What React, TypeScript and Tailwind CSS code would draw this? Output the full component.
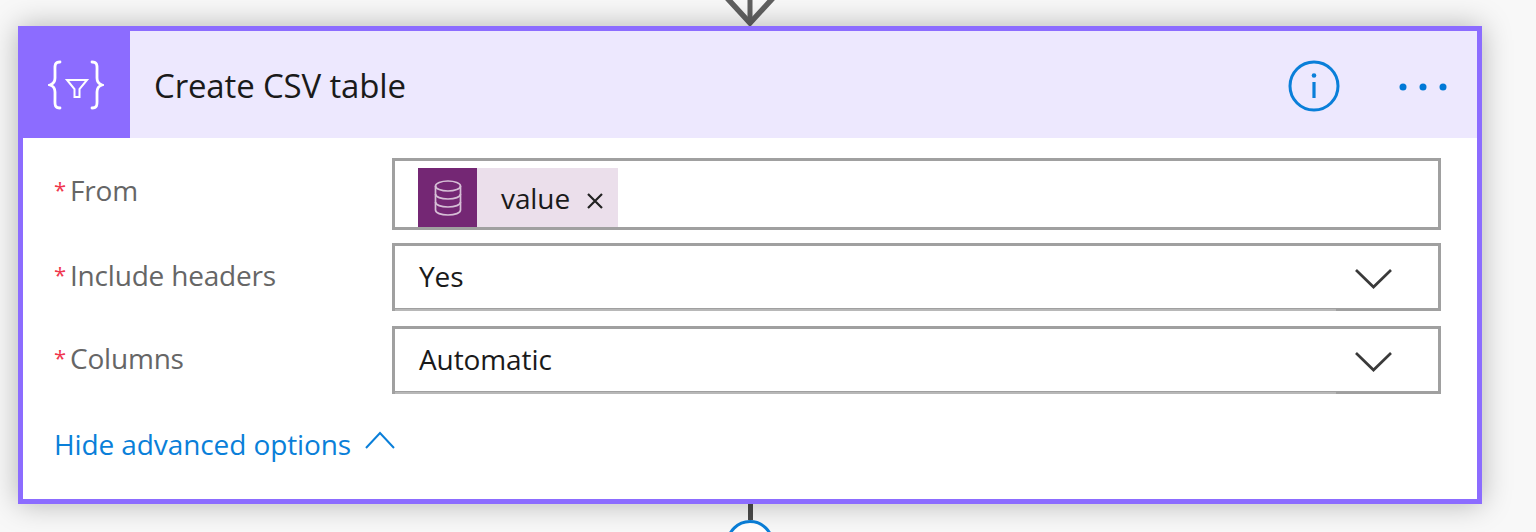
const font = { fontFamily: '"Open Sans", "Noto Sans", sans-serif' };

function Chevron() {
  return (
    <svg width="40" height="24" viewBox="0 0 40 24" fill="none" className="block mt-[3px] ml-[4px]">
      <path d="M2 3 L19.5 20 L37 3" stroke="#3a3a3a" strokeWidth="2.7" />
    </svg>
  );
}

function Label({ text }: { text: string }) {
  return (
    <div className="flex items-center text-[28px] leading-[34px] text-[#666666] tracking-[-0.2px]">
      <span className="w-[16px] text-[22px] text-[#f0364e] mt-[-3px]">*</span>
      <span>{text}</span>
    </div>
  );
}

function SelectRow({ label, value }: { label: string; value: string }) {
  return (
    <div className="grid grid-cols-[338px_1fr] h-[68px]">
      <div className="pt-[15px]">
        <Label text={label} />
      </div>
      <div className="relative flex items-center justify-between border-[3px] border-[#a0a0a0] pl-[24px] pr-[44px]">
        <span className="text-[28px] leading-[34px] text-[#1a1a1a] tracking-[-0.1px] mt-[-2px]">{value}</span>
        <Chevron />
        <div className="absolute left-0 right-[102px] bottom-[-3px] h-[2px] bg-[#b8b8b8]" />
      </div>
    </div>
  );
}

export default function App() {
  return (
    <div style={font} className="w-[1536px] h-[532px] overflow-hidden bg-[#f8f8f8]">
      <div className="w-[1464px] ml-[18px]">
        <div className="flex justify-center h-[26px]">
          <svg width="60" height="26" viewBox="0 0 60 26" fill="none">
            <path d="M30 -4 V24" stroke="#606060" strokeWidth="5" />
            <path d="M7 -2 L30 23 L53 -2" stroke="#606060" strokeWidth="5.5" />
          </svg>
        </div>

        <div className="h-[478px] border-[5px] border-[#8c6cff] bg-white shadow-[0_0_28px_rgba(0,0,0,0.28)] flex flex-col relative">
          <div className="h-[107px] flex bg-[#ede8fe] shrink-0">
            <div className="w-[107px] bg-[#8c6cff] flex items-center justify-center">
              <svg width="56" height="50" viewBox="0 0 56 50" fill="none" stroke="white" strokeWidth="2.8" strokeLinecap="round" className="mt-[1px] ml-[-1px]">
                <path d="M12 2 C6 2 7 6 7 12 V18 C7 22 5 24 2 25 C5 26 7 28 7 32 V38 C7 44 6 48 12 48" />
                <path d="M44 2 C50 2 49 6 49 12 V18 C49 22 51 24 54 25 C51 26 49 28 49 32 V38 C49 44 50 48 44 48" />
                <path d="M19 20 H39 L31.5 29 V37 H26.5 V29 Z" strokeWidth="2" strokeLinejoin="miter" />
              </svg>
            </div>
            <div className="flex-1 flex items-center justify-between pl-[24px] pr-[29px]">
              <span className="text-[33px] leading-[40px] text-[#1a1a1a] tracking-[-0.15px] mt-[2px]">Create CSV table</span>
              <div className="flex items-center gap-[58px] mt-[3px]">
                <svg width="52" height="52" viewBox="0 0 52 52" fill="none">
                  <circle cx="26" cy="26" r="24" stroke="#0a7fd9" strokeWidth="3" />
                  <circle cx="26" cy="15.5" r="2.3" fill="#0a7fd9" />
                  <path d="M26 22 V38" stroke="#0a7fd9" strokeWidth="3.2" />
                </svg>
                <svg width="50" height="10" viewBox="0 0 50 10" fill="#0078d7" className="mt-[2px]">
                  <circle cx="5" cy="5" r="3.5" />
                  <circle cx="25" cy="5" r="3.5" />
                  <circle cx="45" cy="5" r="3.5" />
                </svg>
              </div>
            </div>
          </div>

          <div className="flex flex-col gap-[15px] pl-[31px] pr-[36px] pt-[20px]">
            <div className="grid grid-cols-[338px_1fr] h-[70px]">
              <div className="pt-[15px]">
                <Label text="From" />
              </div>
              <div className="border-[3px] border-[#a0a0a0] pl-[23px] pt-[7px]">
                <div className="inline-flex h-[59px] bg-[#ebdfeb]">
                  <div className="w-[59px] bg-[#742774] flex items-center justify-center">
                    <svg width="30" height="38" viewBox="0 0 30 38" fill="none" stroke="#d6bfd6" strokeWidth="1.7">
                      <ellipse cx="15" cy="7" rx="12.5" ry="5" />
                      <path d="M2.5 7 V31 C2.5 34 8 36 15 36 C22 36 27.5 34 27.5 31 V7" />
                      <path d="M2.5 15 C2.5 18 8 20 15 20 C22 20 27.5 18 27.5 15" />
                      <path d="M2.5 23 C2.5 26 8 28 15 28 C22 28 27.5 26 27.5 23" />
                    </svg>
                  </div>
                  <div className="flex items-center pl-[24px] pr-[14px] gap-[16px]">
                    <span className="text-[28px] leading-[34px] text-[#1a1a1a] mt-[1px] tracking-[-0.1px]">value</span>
                    <svg width="18" height="18" viewBox="0 0 18 18" stroke="#222222" strokeWidth="2.2" className="mt-[6px]">
                      <path d="M2 2 L16 16 M16 2 L2 16" />
                    </svg>
                  </div>
                </div>
              </div>
            </div>
            <SelectRow label="Include headers" value="Yes" />
            <SelectRow label="Columns" value="Automatic" />
          </div>

          <div className="flex items-center pl-[31px] mt-[33px] gap-[13px] text-[#0a7fd9]">
            <span className="text-[28px] leading-[34px] tracking-[-0.1px]">Hide advanced options</span>
            <svg width="32" height="20" viewBox="0 0 32 20" fill="none" stroke="#0a7fd9" strokeWidth="2" className="mt-[-9px]">
              <path d="M2 18 L16 3 L30 18" />
            </svg>
          </div>
        </div>

        <div className="flex flex-col items-center">
          <div className="w-[5px] h-[16px] bg-[#4a4a4a]" />
          <div className="w-[48px] h-[48px] rounded-full border-[3px] border-[#0a7fd9] bg-white shrink-0" />
        </div>
      </div>
    </div>
  );
}
